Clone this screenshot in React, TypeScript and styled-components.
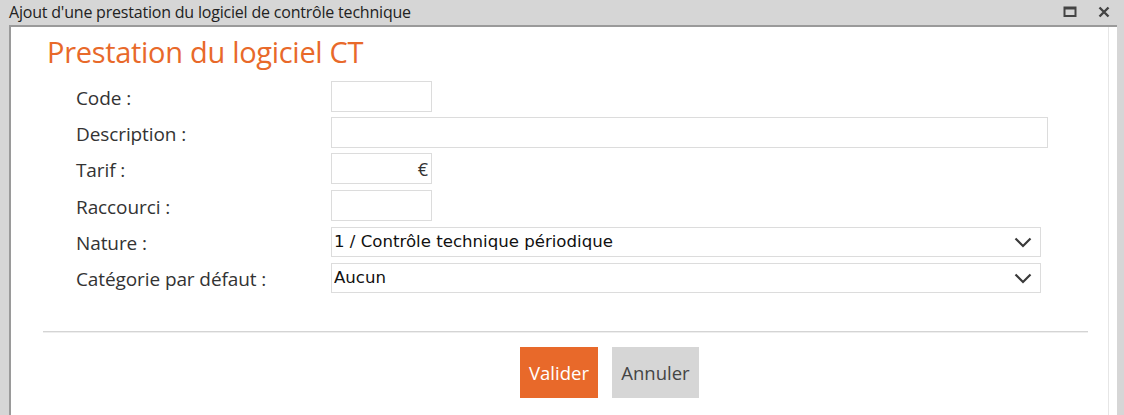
import styled, { createGlobalStyle } from "styled-components";
import { useState } from "react";

const GlobalStyle = createGlobalStyle`
    html, body {
        margin: 0;
        padding: 0;
        background: #d6d6d6;
    }
    * {
        box-sizing: border-box;
    }
`;

const App = () => {
    const [code, setCode] = useState<string>("");
    const [description, setDescription] = useState<string>("");
    const [tarif, setTarif] = useState<string>("");
    const [raccourci, setRaccourci] = useState<string>("");
    const [nature, setNature] = useState<string>("1");
    const [categorie, setCategorie] = useState<string>("aucun");

    return (
        <Window>
            <GlobalStyle />
            <TitleBar>
                <Title>Ajout d'une prestation du logiciel de contrôle technique</Title>
                <TitleButtons>
                    <TitleButton aria-label="Agrandir">
                        <svg width="14" height="12" viewBox="0 0 14 12">
                            <rect x="1.5" y="1.5" width="11" height="8.5" fill="none" stroke="#444" strokeWidth="2" />
                            <rect x="1" y="1" width="12" height="2.5" fill="#444" />
                        </svg>
                    </TitleButton>
                    <TitleButton aria-label="Fermer">
                        <svg width="12" height="12" viewBox="0 0 12 12">
                            <path d="M1.5 1.5 L10.5 10.5 M10.5 1.5 L1.5 10.5" stroke="#444" strokeWidth="2.4" />
                        </svg>
                    </TitleButton>
                </TitleButtons>
            </TitleBar>
            <Body>
                <Content>
                    <Heading>Prestation du logiciel CT</Heading>
                    <Form>
                        <Label>Code :</Label>
                        <TextInput $width={101} value={code} onChange={(e) => setCode(e.target.value)} />

                        <Label>Description :</Label>
                        <TextInput $width={717} value={description} onChange={(e) => setDescription(e.target.value)} />

                        <Label>Tarif :</Label>
                        <MoneyBox>
                            <MoneyInput value={tarif} onChange={(e) => setTarif(e.target.value)} />
                            <Euro>€</Euro>
                        </MoneyBox>

                        <Label>Raccourci :</Label>
                        <TextInput $width={101} value={raccourci} onChange={(e) => setRaccourci(e.target.value)} />

                        <Label>Nature :</Label>
                        <SelectBox>
                            <Select value={nature} onChange={(e) => setNature(e.target.value)}>
                                <option value="1">1 / Contrôle technique périodique</option>
                            </Select>
                            <Chevron />
                        </SelectBox>

                        <Label>Catégorie par défaut :</Label>
                        <SelectBox>
                            <Select value={categorie} onChange={(e) => setCategorie(e.target.value)}>
                                <option value="aucun">Aucun</option>
                            </Select>
                            <Chevron />
                        </SelectBox>
                    </Form>
                    <Divider />
                    <Actions>
                        <Button $primary>Valider</Button>
                        <Button>Annuler</Button>
                    </Actions>
                </Content>
                <ScrollTrack />
            </Body>
        </Window>
    );
};

const Chevron = () => (
    <ChevronIcon width="18" height="11" viewBox="0 0 18 11">
        <path d="M1.5 1.5 L9 9 L16.5 1.5" fill="none" stroke="#3a3a3a" strokeWidth="2.2" />
    </ChevronIcon>
);

const Window = styled.div`
    width: 1124px;
    height: 415px;
    display: flex;
    flex-direction: column;
    background: #d6d6d6;
    overflow: hidden;
`;

const TitleBar = styled.div`
    height: 25px;
    display: flex;
    align-items: center;
    justify-content: space-between;
    padding: 0 14px 2px 9px;
`;

const Title = styled.div`
    font-family: "Open Sans", sans-serif;
    font-size: 16px;
    color: #222;
    letter-spacing: -0.2px;
`;

const TitleButtons = styled.div`
    display: flex;
    gap: 21px;
    align-items: center;
`;

const TitleButton = styled.button`
    border: none;
    background: transparent;
    padding: 0;
    display: flex;
    cursor: pointer;
`;

const Body = styled.div`
    flex: 1;
    display: flex;
    margin: 0 7px 0 9px;
    background: #fff;
    border-top: 2px solid #9a9a9a;
    border-left: 2px solid #9a9a9a;
`;

const Content = styled.div`
    flex: 1;
    padding: 5px 20px 0 32px;
    display: flex;
    flex-direction: column;
`;

const ScrollTrack = styled.div`
    width: 9px;
    border-left: 1px solid #e6e6e6;
`;

const Heading = styled.h1`
    margin: 0 0 8.5px 4px;
    font-family: "Open Sans", sans-serif;
    font-weight: 400;
    font-size: 29px;
    line-height: 40px;
    color: #e8692a;
    letter-spacing: -0.3px;
`;

const Form = styled.div`
    display: grid;
    grid-template-columns: 255px 1fr;
    grid-auto-rows: 31px;
    row-gap: 5.4px;
    padding-left: 33px;
    align-items: center;
`;

const Label = styled.label`
    padding-top: 3px;
    font-family: "Open Sans", sans-serif;
    font-size: 19px;
    color: #333;
    letter-spacing: -0.1px;
`;

const TextInput = styled.input`
    width: ${(p: { $width: number }) => p.$width}px;
    height: 31px;
    border: 1px solid #dcdcdc;
    outline: none;
    padding: 0 6px;
    font-family: "Open Sans", sans-serif;
    font-size: 16px;
`;

const MoneyBox = styled.div`
    width: 101px;
    height: 31px;
    border: 1px solid #dcdcdc;
    display: flex;
    align-items: center;
    padding-right: 3px;
`;

const MoneyInput = styled.input`
    flex: 1;
    min-width: 0;
    height: 100%;
    border: none;
    outline: none;
    text-align: right;
    font-family: "Open Sans", sans-serif;
    font-size: 16px;
`;

const Euro = styled.span`
    font-family: "Open Sans", sans-serif;
    font-size: 18px;
    color: #333;
`;

const SelectBox = styled.div`
    position: relative;
    width: 710px;
    height: 30px;
`;

const Select = styled.select`
    appearance: none;
    width: 100%;
    height: 100%;
    border: 1px solid #dcdcdc;
    background: #fff;
    outline: none;
    padding: 0 30px 0 2px;
    font-family: "DejaVu Sans", Verdana, sans-serif;
    font-size: 16.6px;
    color: #111;
`;

const ChevronIcon = styled.svg`
    position: absolute;
    right: 9px;
    top: 10px;
    pointer-events: none;
`;

const Divider = styled.div`
    margin: 38px 0 0 0;
    width: 1045px;
    border-top: 1px solid #d4d4d4;
    border-bottom: 1px solid #eeeeee;
`;

const Actions = styled.div`
    display: flex;
    gap: 14px;
    padding: 14px 0 0 477px;
`;

const Button = styled.button<{ $primary?: boolean }>`
    height: 51px;
    min-width: ${(p) => (p.$primary ? "78px" : "87px")};
    padding: 0 8px;
    border: none;
    font-family: "Open Sans", sans-serif;
    font-size: 18.5px;
    background: ${(p) => (p.$primary ? "#e8692a" : "#d6d6d6")};
    color: ${(p) => (p.$primary ? "#fff" : "#444")};
    cursor: pointer;
`;

export default App;
